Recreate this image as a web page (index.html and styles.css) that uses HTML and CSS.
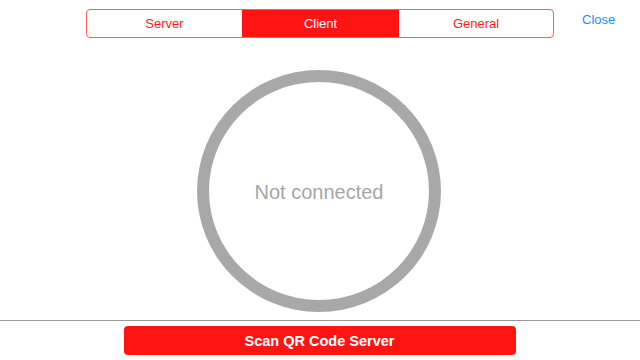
FILE: index.html
```html
<!DOCTYPE html>
<html lang="en">

<head>
    <meta charset="UTF-8">
    <meta name="viewport" content="width=device-width, initial-scale=1.0">
    <title>Connection</title>
    <link rel="stylesheet" href="styles.css">
</head>

<body>
    <div class="header">
        <div class="segments">
            <div class="seg">Server</div>
            <div class="seg active">Client</div>
            <div class="seg">General</div>
        </div>
        <a class="close" href="#">Close</a>
    </div>
    <div class="main">
        <div class="ring">Not connected</div>
    </div>
    <div class="footer">
        <button class="scan">Scan QR Code Server</button>
    </div>
</body>

</html>
```

FILE: styles.css
```css
* {
    box-sizing: border-box;
}

body {
    margin: 0;
    height: 100vh;
    display: flex;
    flex-direction: column;
    font-family: "Liberation Sans", Arial, sans-serif;
    background-color: #fff;
    overflow: hidden;
}

.header {
    display: flex;
    align-items: flex-start;
    padding: 9px 0 0 86px;
    height: 46px;
}

.segments {
    display: flex;
    width: 468px;
    height: 29px;
    border: 1px solid #ff5c5c;
    border-radius: 4px;
    overflow: hidden;
}

.seg {
    display: flex;
    align-items: center;
    justify-content: center;
    color: #ff1a1a;
    font-size: 13px;
}

.seg:nth-child(1) {
    width: 155px;
}

.seg:nth-child(2) {
    width: 157px;
}

.seg:nth-child(3) {
    flex: 1;
}

.seg.active {
    background-color: #ff1414;
    color: #fff;
}

.close {
    margin-left: 28px;
    line-height: 22px;
    font-size: 13px;
    color: #1a8cff;
    text-decoration: none;
}

.main {
    flex: 1;
    display: flex;
    justify-content: center;
    padding: 24px 0 0 0;
}

.ring {
    width: 244px;
    height: 242px;
    border: 12px solid #a8a8a8;
    border-radius: 50%;
    display: flex;
    align-items: center;
    justify-content: center;
    padding-top: 3px;
    margin-right: 2px;
    color: #a6a6a6;
    font-size: 20px;
}

.footer {
    height: 40px;
    border-top: 1px solid #999;
    display: flex;
    justify-content: center;
    padding-top: 5px;
}

.scan {
    width: 392px;
    height: 29px;
    border: none;
    border-radius: 4px;
    background-color: #ff1414;
    color: #fff;
    font: bold 14.5px "Liberation Sans", Arial, sans-serif;
    margin-right: 1px;
    cursor: pointer;
}
```
